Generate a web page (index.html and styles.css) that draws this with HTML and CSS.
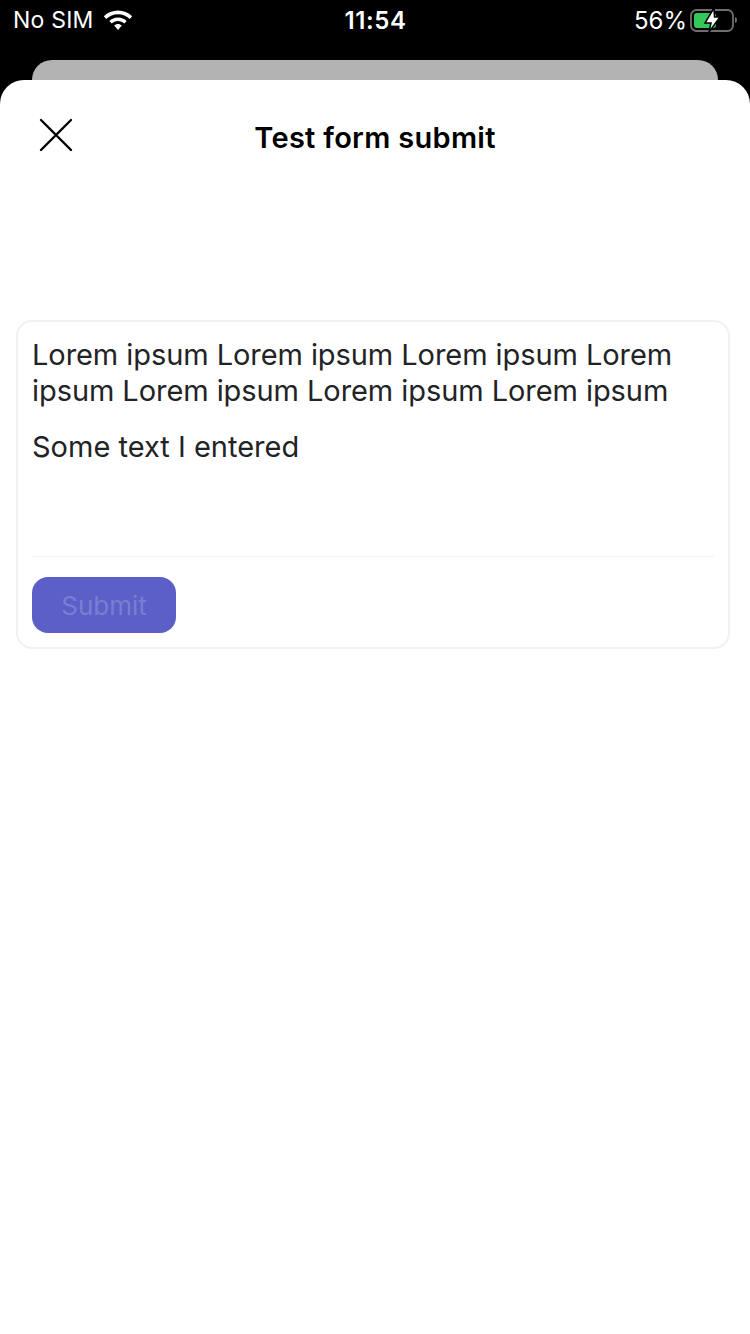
FILE: index.html
```html
<!DOCTYPE html>
<html lang="en">
<head>
<meta charset="utf-8">
<title>Test form submit</title>
<link rel="stylesheet" href="styles.css">
</head>
<body>
<div class="screen">
  <div class="statusbar">
    <div class="status-left">
      <span>No SIM</span>
      <svg class="wifi" width="30" height="24" viewBox="0 0 30 24"><path d="M15 2.500C9.500 2.500 4.600 4.700 0.800 8.200L3.300 10.900C6.400 8 10.500 6.200 15 6.200S23.600 8 26.700 10.900L29.200 8.200C25.400 4.700 20.500 2.500 15 2.500Z" fill="#fff"/><path d="M15 9.400C11.600 9.400 8.600 10.700 6.300 12.900L8.800 15.500C10.400 14 12.600 13 15 13S19.600 14 21.200 15.500L23.700 12.900C21.400 10.700 18.400 9.400 15 9.400Z" fill="#fff"/><path d="M15 16C13.500 16 12.200 16.600 11.200 17.600L15 22L18.800 17.600C17.800 16.600 16.500 16 15 16Z" fill="#fff"/></svg>
    </div>
    <div class="status-time">11:54</div>
    <div class="status-right">
      <span>56%</span>
      <svg class="battery" width="48" height="26" viewBox="0 0 48 26"><rect x="1" y="3" width="42" height="21" rx="5.500" fill="none" stroke="#6f6f6f" stroke-width="1.800"/><rect x="4" y="6" width="22" height="15" rx="3" fill="#34c759"/><path d="M45 10C46.500 10.500 47 11.500 47 13S46.500 15.500 45 16Z" fill="#6f6f6f"/><path d="M24 1L15 16H21L19 25L30 10H24.500Z" fill="#fff" stroke="#000" stroke-width="1.500"/></svg>
    </div>
  </div>
  <div class="backsheet"></div>
  <main class="sheet">
    <header class="sheet-head">
      <button class="close" aria-label="Close">
        <svg width="34" height="34" viewBox="0 0 34 34"><path d="M2 2L32 32M32 2L2 32" stroke="#000" stroke-width="2.400" stroke-linecap="round"/></svg>
      </button>
      <h1>Test form submit</h1>
    </header>
    <form class="card">
      <p class="label">Lorem ipsum Lorem ipsum Lorem ipsum Lorem ipsum Lorem ipsum Lorem ipsum Lorem ipsum</p>
      <p class="entered">Some text I entered</p>
      <div class="actions">
        <button type="button" class="submit">Submit</button>
      </div>
    </form>
  </main>
</div>
</body>
</html>
```
FILE: styles.css
```css
* { box-sizing: border-box; }
html, body { margin: 0; padding: 0; }
body { width: 750px; height: 1334px; overflow: hidden; background: #000; font-family: Inter, "Liberation Sans", sans-serif; }
.screen { width: 750px; height: 1334px; display: flex; flex-direction: column; background: #000; }
.statusbar { height: 40px; padding: 0 12px 0 13px; display: grid; grid-template-columns: 1fr auto 1fr; align-items: center; color: #fff; font-size: 23px; letter-spacing: 0.2px; }
.status-left { display: flex; align-items: center; gap: 9px; }
.status-time { font-weight: 600; font-size: 24px; letter-spacing: 0.6px; }
.status-right { display: flex; align-items: center; justify-content: flex-end; gap: 3px; }
.status-right span { font-size: 24px; letter-spacing: 0; }
.backsheet { height: 40px; margin: 20px 32px -20px; background: #b3b3b3; border-radius: 20px 20px 0 0; }
.sheet { flex: 1; background: #fff; border-radius: 24px 24px 0 0; padding: 0 20px 0 16px; display: flex; flex-direction: column; position: relative; z-index: 1; }
.sheet-head { height: 240px; position: relative; padding: 39px 0 0 4px; text-align: center; }
.sheet-head h1 { margin: 0; font-size: 29px; line-height: 38px; font-weight: 600; letter-spacing: 0.3px; color: #000; }
.close { position: absolute; left: 23px; top: 38px; padding: 0; border: 0; background: none; line-height: 0; }
.card { height: 329px; border: 2px solid #f1f1f3; border-radius: 16px; padding: 15px 14px 14px; display: flex; flex-direction: column; color: #212326; }
.label { margin: 0; font-size: 29px; line-height: 36px; letter-spacing: -0.07px; }
.entered { margin: 20px 0 0; font-size: 29px; line-height: 36px; flex: 1; }
.actions { border-top: 1px solid #f1f1f3; padding-top: 20px; }
.submit { display: block; width: 144px; height: 56px; border: 0; border-radius: 16px; background: #5b5fc7; color: #7a7ed2; font-family: inherit; font-size: 26px; padding: 0; }
```
